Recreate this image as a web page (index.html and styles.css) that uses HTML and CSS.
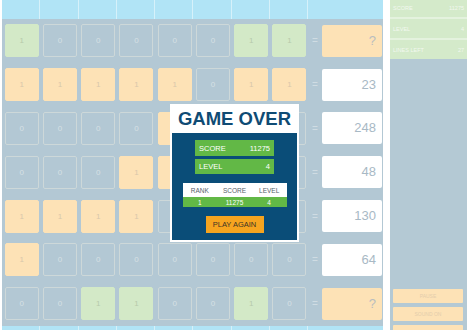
FILE: index.html
```html
<!DOCTYPE html>
<html lang="en">
<head>
    <meta charset="UTF-8">
    <meta name="viewport" content="width=device-width, initial-scale=1.0">
    <link rel="stylesheet" href="styles.css">
</head>
<body>
    <div id="game">
        <div id="board">
            <div class="strip">
                <span></span><span></span><span></span><span></span>
                <span></span><span></span><span></span><span></span>
                <span class="wide"></span>
            </div>

            <div class="row">
                <div class="tile ok">1</div>
                <div class="tile">0</div>
                <div class="tile">0</div>
                <div class="tile">0</div>
                <div class="tile">0</div>
                <div class="tile">0</div>
                <div class="tile ok">1</div>
                <div class="tile ok">1</div>
                <div class="result"><span class="eq">=</span><div class="answer open">?</div></div>
            </div>

            <div class="row">
                <div class="tile on">1</div>
                <div class="tile on">1</div>
                <div class="tile on">1</div>
                <div class="tile on">1</div>
                <div class="tile on">1</div>
                <div class="tile">0</div>
                <div class="tile on">1</div>
                <div class="tile on">1</div>
                <div class="result"><span class="eq">=</span><div class="answer">23</div></div>
            </div>

            <div class="row">
                <div class="tile">0</div>
                <div class="tile">0</div>
                <div class="tile">0</div>
                <div class="tile">0</div>
                <div class="tile on">1</div>
                <div class="tile on">1</div>
                <div class="tile">0</div>
                <div class="tile">0</div>
                <div class="result"><span class="eq">=</span><div class="answer">248</div></div>
            </div>

            <div class="row">
                <div class="tile">0</div>
                <div class="tile">0</div>
                <div class="tile">0</div>
                <div class="tile on">1</div>
                <div class="tile on">1</div>
                <div class="tile">0</div>
                <div class="tile">0</div>
                <div class="tile">0</div>
                <div class="result"><span class="eq">=</span><div class="answer">48</div></div>
            </div>

            <div class="row">
                <div class="tile on">1</div>
                <div class="tile on">1</div>
                <div class="tile on">1</div>
                <div class="tile on">1</div>
                <div class="tile">0</div>
                <div class="tile">0</div>
                <div class="tile on">1</div>
                <div class="tile">0</div>
                <div class="result"><span class="eq">=</span><div class="answer">130</div></div>
            </div>

            <div class="row">
                <div class="tile on">1</div>
                <div class="tile">0</div>
                <div class="tile">0</div>
                <div class="tile">0</div>
                <div class="tile">0</div>
                <div class="tile">0</div>
                <div class="tile">0</div>
                <div class="tile">0</div>
                <div class="result"><span class="eq">=</span><div class="answer">64</div></div>
            </div>

            <div class="row">
                <div class="tile">0</div>
                <div class="tile">0</div>
                <div class="tile ok">1</div>
                <div class="tile ok">1</div>
                <div class="tile">0</div>
                <div class="tile">0</div>
                <div class="tile ok">1</div>
                <div class="tile">0</div>
                <div class="result"><span class="eq">=</span><div class="answer open">?</div></div>
            </div>

            <div class="strip">
                <span></span><span></span><span></span><span></span>
                <span></span><span></span><span></span><span></span>
                <span class="wide"></span>
            </div>
        </div>

        <div id="sidebar">
            <div class="stats">
                <div class="stat"><span>SCORE</span><span>11275</span></div>
                <div class="stat"><span>LEVEL</span><span>4</span></div>
                <div class="stat"><span>LINES LEFT</span><span>27</span></div>
            </div>
            <div class="controls">
                <button>PAUSE</button>
                <button>SOUND ON</button>
                <button>NEW GAME</button>
            </div>
        </div>
    </div>

    <div id="gameover">
        <h1>GAME OVER</h1>
        <div class="panel">
            <div class="line"><span>SCORE</span><span>11275</span></div>
            <div class="line"><span>LEVEL</span><span>4</span></div>
            <table class="scores">
                <tr><th>RANK</th><th>SCORE</th><th>LEVEL</th></tr>
                <tr><td>1</td><td>11275</td><td>4</td></tr>
            </table>
            <button class="again">PLAY AGAIN</button>
        </div>
    </div>
</body>
</html>
```

FILE: styles.css
```css
html, body {
    margin: 0;
    height: 330px;
    overflow: hidden;
}

body {
    font-family: "Liberation Sans", Arial, sans-serif;
    background-color: #fff;
    position: relative;
}

#game {
    display: flex;
    align-items: stretch;
    padding-left: 2px;
    gap: 7px;
}

#board {
    width: 381px;
    background-color: #b3c8d4;
}

.strip {
    display: flex;
    height: 19px;
    background-color: #b1e4f6;
}

.strip span {
    width: 38.25px;
    box-sizing: border-box;
    border-right: 1px solid #d6f1fa;
}

.strip span.wide {
    width: 75px;
    border-right: none;
}

.row {
    display: grid;
    grid-template-columns: repeat(8, 38.25px) 75px;
    height: 43.8px;
    align-items: center;
    justify-items: center;
}

.tile {
    width: 34px;
    height: 33px;
    box-sizing: border-box;
    border: 1px solid #cdd8d9;
    border-radius: 2px;
    margin-left: 1px;
    font-size: 8px;
    line-height: 31px;
    text-align: center;
    color: #d6e0e4;
}

.tile.on {
    background-color: #fde2b6;
    border-color: #fde2b6;
    color: #d8c7ab;
}

.tile.ok {
    background-color: #d3e9c7;
    border-color: #d3e9c7;
    color: #b7caab;
}

.result {
    width: 100%;
    display: flex;
    align-items: center;
}

.eq {
    flex: 1;
    text-align: center;
    font-size: 10px;
    color: #cfdce3;
}

.answer {
    width: 60px;
    height: 32px;
    margin-right: 1px;
    box-sizing: border-box;
    padding-right: 6px;
    border-radius: 2px;
    background-color: #fff;
    font-size: 13px;
    line-height: 32px;
    text-align: right;
    color: #a8b9c5;
}

.answer.open {
    background-color: #fde2b6;
    color: #b9bdbf;
}

#sidebar {
    width: 77px;
    background-color: #b4c9d4;
    display: flex;
    flex-direction: column;
}

.stats {
    margin-top: -2px;
    display: flex;
    flex-direction: column;
    gap: 2px;
    background-color: #e4f2de;
}

.stat {
    height: 19px;
    display: flex;
    align-items: center;
    justify-content: space-between;
    padding: 0 3px;
    background-color: #d4eaca;
    font-size: 5.5px;
    color: #f2f8ef;
}

.controls {
    margin-top: auto;
    display: flex;
    flex-direction: column;
    gap: 4px;
    padding: 0 4px 6px 3px;
}

.controls button {
    height: 14px;
    border: none;
    border-radius: 1px;
    background-color: #fde2b6;
    font-family: inherit;
    font-size: 5px;
    color: #e4cdac;
    padding: 0;
}

#gameover {
    position: absolute;
    left: 170px;
    top: 104px;
    width: 129px;
    box-sizing: border-box;
    padding: 2px;
    background-color: #fff;
}

#gameover h1 {
    margin: 0;
    height: 27px;
    font-size: 18.5px;
    line-height: 25px;
    text-align: center;
    color: #0f4b74;
}

.panel {
    background-color: #0a4d78;
    padding: 7px 0;
}

.line {
    width: 79px;
    height: 16px;
    margin: 0 auto 3px;
    box-sizing: border-box;
    padding: 0 4px;
    display: flex;
    align-items: center;
    justify-content: space-between;
    background-color: #62b846;
    color: #fff;
    font-size: 7.5px;
}

.line + .line {
    height: 15px;
    margin-bottom: 0;
}

.scores {
    width: 104px;
    margin: 9px auto 0;
    border-collapse: collapse;
    table-layout: fixed;
    font-size: 6.5px;
}

.scores th {
    height: 14px;
    padding: 0;
    background-color: #fff;
    color: #56626b;
    font-weight: normal;
}

.scores td {
    height: 10px;
    padding: 0;
    background-color: #62b846;
    color: #fff;
    text-align: center;
}

.again {
    display: block;
    width: 58px;
    height: 17px;
    margin: 9px auto 0;
    padding: 0;
    border: none;
    background-color: #f6a41f;
    font-family: inherit;
    font-size: 7.5px;
    color: #3b3426;
}
```
